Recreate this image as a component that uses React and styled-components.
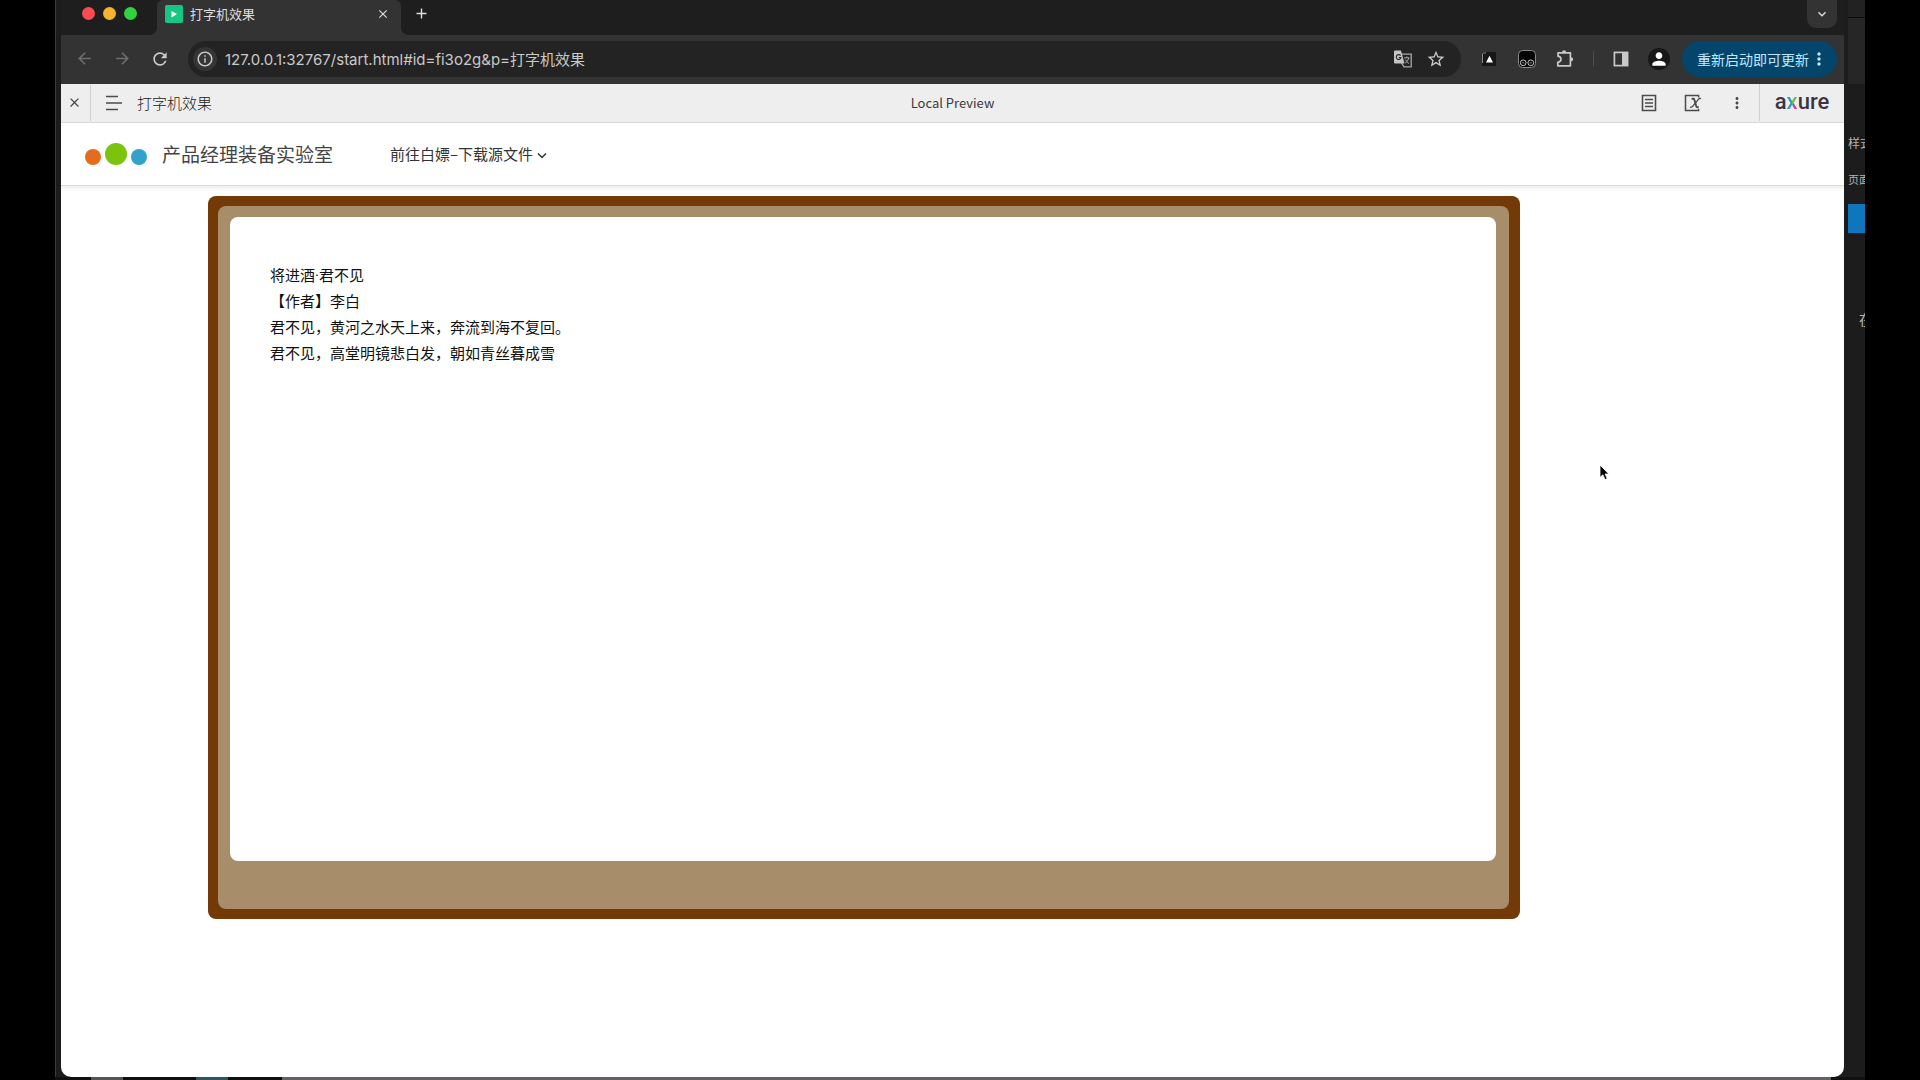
import { useState } from 'react';
import styled, { createGlobalStyle } from 'styled-components';
import {
    MdAdd,
    MdArrowBack,
    MdArrowForward,
    MdClose,
    MdInfoOutline,
    MdKeyboardArrowDown,
    MdMoreVert,
    MdPerson,
    MdRefresh,
    MdStarBorder,
} from 'react-icons/md';

const GlobalStyle = createGlobalStyle`
  *, *::before, *::after {
    box-sizing: border-box;
  }
  body {
    margin: 0;
    background-color: #000000;
    font-family: Roboto, "Noto Sans CJK SC", sans-serif;
  }
  button, input {
    padding: 0;
    border: 0;
    background: none;
    color: inherit;
    font: inherit;
  }
  svg {
    display: block;
    flex: none;
  }
`
const Desktop = styled.div`
  position: relative;
  display: grid;
  grid-template-columns: 6px minmax(0, 1fr) 21px;
  grid-template-rows: 1fr 3px;
  min-height: 100vh;
  margin: 0 55px;
  background-color: #1c1c1c;
  overflow: hidden;
`
const LeftEdge = styled.div`
  border-left: 1px solid #3a3a3a;
`
const Window = styled.div`
  display: flex;
  flex-direction: column;
  border-radius: 0 0 10px 10px;
  background-color: #FFFFFF;
  overflow: hidden;
`
const SidePanel = styled.aside`
  display: flex;
  flex-direction: column;
  padding-left: 4px;
  color: #b4b4b4;
  overflow: hidden;
  white-space: nowrap;
`
const PanelTop = styled.div`
  height: 84px;
  background: linear-gradient(#222222 17px, #0c0c0c 17px, #0c0c0c 18px, #262626 18px);
`
const PanelLabel = styled.div`
  margin-top: ${({ $top }) => $top}px;
  padding-left: ${({ $indent }) => $indent || 0}px;
  font-size: ${({ $size }) => $size}px;
  line-height: 20px;
`
const PanelButton = styled.div`
  height: 29px;
  margin-top: 13px;
  background-color: #0f75bd;
`
const Dock = styled.div`
  grid-column: 1 / -1;
  display: flex;
  padding: 0 34px 0 36px;
  background-color: #101010;
`
const DockItem = styled.div`
  width: 32px;
  margin-right: 73px;
  background-color: ${({ $color }) => $color};
`
const DockBar = styled.div`
  flex: 1;
  margin-left: -19px;
  background-color: #636163;
`

const TabStrip = styled.div`
  display: flex;
  align-items: center;
  height: 35px;
  padding: 0 7px 8px 21px;
  background-color: #1e1e1e;
  color: #dedede;
`
const Light = styled.span`
  width: 13px;
  height: 13px;
  margin-right: 8px;
  border-radius: 50%;
  background-color: ${({ $color }) => $color};
`
const Tab = styled.div`
  position: relative;
  display: flex;
  align-items: center;
  align-self: flex-start;
  width: 244px;
  height: 35px;
  margin-left: 12px;
  padding: 0 8px 8px;
  border-radius: 6px 6px 0 0;
  background-color: #333333;
  font-size: 13px;

  &::before, &::after {
    content: '';
    position: absolute;
    bottom: 0;
    width: 8px;
    height: 8px;
  }
  &::before {
    left: -8px;
    background: radial-gradient(circle at 0 0, transparent 8px, #333333 8px);
  }
  &::after {
    right: -8px;
    background: radial-gradient(circle at 100% 0, transparent 8px, #333333 8px);
  }
`
const TabTitle = styled.span`
  flex: 1;
  margin-left: 7px;
`
const IconButton = styled.button`
  display: flex;
  flex: none;
  justify-content: center;
  align-items: center;
  width: ${({ $width }) => $width || 30}px;
  height: 30px;
  color: ${({ $dim }) => ($dim ? '#6e6e6e' : 'inherit')};
  cursor: pointer;
`
const TabClose = styled(IconButton)`
  width: 20px;
  height: 20px;
`
const NewTab = styled(IconButton)`
  margin-left: 5px;
`
const TabSearch = styled(IconButton)`
  height: 28px;
  margin-left: auto;
  border-radius: 0 0 9px 9px;
  background-color: #333333;
`

const Toolbar = styled.div`
  display: flex;
  align-items: center;
  gap: 8px;
  height: 49px;
  padding: 0 7px 2px 8px;
  background-color: #333333;
  color: #c9c9c9;
`
const Omnibox = styled.label`
  display: flex;
  flex: 1;
  align-items: center;
  min-width: 0;
  height: 36px;
  margin: 0 5px;
  padding: 0 10px 0 5px;
  border-radius: 18px;
  background-color: #232323;
`
const SiteInfo = styled.span`
  display: flex;
  justify-content: center;
  align-items: center;
  width: 24px;
  height: 24px;
  border-radius: 50%;
  background-color: #353535;
`
const Url = styled.input`
  flex: 1;
  min-width: 0;
  margin-left: 8px;
  font-family: Inter, "Noto Sans CJK SC", sans-serif;
  font-size: 15px;
  outline: none;
`
const Divider = styled.span`
  width: 1px;
  height: 16px;
  margin: 0 4px 0 5px;
  background-color: #4c4c4c;
`
const Avatar = styled.span`
  display: flex;
  justify-content: center;
  align-items: center;
  width: 22px;
  height: 22px;
  border-radius: 50%;
  background-color: #171717;
  color: #FFFFFF;
`
const UpdateButton = styled.button`
  display: flex;
  flex: none;
  align-items: center;
  height: 36px;
  padding: 0 8px 0 15px;
  border-radius: 18px;
  background-color: #04466b;
  color: #c2e6ff;
  font-size: 14px;
  cursor: pointer;
`

const PreviewBar = styled.div`
  display: grid;
  grid-template-columns: 1fr auto 1fr;
  height: 39px;
  padding-bottom: 1px;
  border-bottom: 1px solid #d8d8d8;
  background-color: #eeeeee;
  color: #4b4b4b;
  font-family: "Noto Sans CJK SC", sans-serif;
  font-size: 15px;
`
const Side = styled.div`
  display: flex;
  align-items: center;
  justify-content: ${({ $end }) => ($end ? 'flex-end' : 'flex-start')};
`
const PreviewTitle = styled.div`
  align-self: center;
  color: #3a3a3a;
  font-size: 13px;
`
const ClosePreview = styled(IconButton)`
  height: 36px;
  margin-right: 9px;
  padding-right: 2px;
  border-right: 1px solid #d0d0d0;
`
const PageName = styled.span`
  margin-left: 9px;
  color: #222222;
  font-weight: 300;
`
const Brand = styled.a`
  display: flex;
  justify-content: center;
  align-items: center;
  align-self: stretch;
  width: 85px;
  padding-bottom: 2px;
  border-left: 1px solid #cfcfcf;
  color: #3c3541;
  font-family: Roboto, sans-serif;
  font-size: 22px;
  font-weight: 500;
  text-decoration: none;
`
const BrandX = styled.span`
  background: conic-gradient(from 0deg at 50% 58%, #6cc04a 0 90deg, #d63ba0 90deg 180deg, #2f9db8 180deg);
  background-clip: text;
  color: transparent;
`

const SiteHeader = styled.header`
  display: flex;
  align-items: center;
  height: 63px;
  padding: 0 24px 1px;
  border-bottom: 1px solid #d9d9d9;
  box-shadow: 0 3px 3px #f1f1f1;
  color: #444444;
`
const LogoDots = styled.span`
  display: flex;
  align-items: flex-end;
  gap: 4px;
`
const LogoDot = styled.span`
  width: ${({ $size }) => $size}px;
  height: ${({ $size }) => $size}px;
  border-radius: 50%;
  background-color: ${({ $color }) => $color};
`
const SiteName = styled.h1`
  margin: 0 0 0 15px;
  font-size: 19px;
  font-weight: 400;
`
const SiteMenu = styled.button`
  display: flex;
  align-items: center;
  gap: 2px;
  margin-left: 57px;
  color: #333333;
  font-family: "Noto Sans CJK SC", sans-serif;
  font-size: 15px;
  cursor: pointer;
`
const Board = styled.main`
  margin: 10px 324px 0 147px;
  padding: 10px 11px 10px 10px;
  border-radius: 8px;
  background-color: #733a08;
`
const Frame = styled.div`
  padding: 11px 13px 48px 12px;
  border-radius: 8px;
  background-color: #a88d6b;
`
const Paper = styled.article`
  min-height: 644px;
  padding: 46px 40px;
  border-radius: 8px;
  background-color: #FFFFFF;
`
const Line = styled.p`
  margin: 0;
  color: #111111;
  font-size: 15px;
  line-height: 26px;
`
const Pointer = styled.svg`
  position: absolute;
  top: 464px;
  right: 252px;
`

const poem = [
    '将进酒·君不见',
    '【作者】李白',
    '君不见，黄河之水天上来，奔流到海不复回。',
    '君不见，高堂明镜悲白发，朝如青丝暮成雪',
];

const Favicon = () => (
    <svg width="18" height="18" viewBox="0 0 18 18">
        <rect width="18" height="18" rx="2" fill="#16c784" />
        <path d="M6.5 6 L12 9 L6.5 12.4 Z" fill="#FFFFFF" />
    </svg>
)

const TranslateIcon = () => (
    <svg width="18" height="18" viewBox="0 0 18 18" fill="none">
        <path d="M8 4.2 H17.2 V16.8 H10 L7.5 13" stroke="#a8a8a8" strokeWidth="1.3" />
        <path d="M1 0.5 H7 L10.5 13.5 H1 Q0 13.5 0 12.5 V1.5 Q0 0.5 1 0.5 Z" fill="#c4c4c4" />
        <path d="M6.6 5.6 A2.4 2.4 0 1 0 7 7.6 H4.8" stroke="#2b2b2b" strokeWidth="1.1" />
        <path d="M10.2 7.8 H15.6 M12.8 6.4 V7.8 M14.8 8 Q14 11.5 11.2 13 M11.4 9.5 Q12.5 12 15 13.6" stroke="#a8a8a8" />
    </svg>
)

const TriangleIcon = () => (
    <svg width="16" height="16" viewBox="0 0 16 16">
        <rect x="1" y="1" width="14" height="14" rx="1" fill="#171717" />
        <path d="M1.5 12 V3 Q1.5 2 2.5 2 H5" fill="none" stroke="#8a8a8a" />
        <path d="M8.5 4.8 L12 11.5 H5 Z" fill="#FFFFFF" />
    </svg>
)

const MonkeyIcon = () => (
    <svg width="18" height="18" viewBox="0 0 18 18">
        <rect x="0.5" y="0.5" width="17" height="17" rx="4" fill="#050505" stroke="#8a8a8a" />
        <circle cx="5.2" cy="12.8" r="2.9" fill="#111111" stroke="#bdbdbd" />
        <circle cx="12.8" cy="12.8" r="2.9" fill="#111111" stroke="#bdbdbd" />
        <circle cx="5.2" cy="12.8" r="1" fill="#555555" />
        <circle cx="12.8" cy="12.8" r="1" fill="#555555" />
    </svg>
)

const PuzzleIcon = () => (
    <svg width="18" height="18" viewBox="0 0 18 18">
        <path
            d="M2 2.8 H14.4 V15.8 H1.8 V12.4 Q5 11.8 5 9.3 Q5 6.8 2 6.2 Z"
            fill="none"
            stroke="#c9c9c9"
            strokeWidth="1.7"
            strokeLinejoin="round"
        />
        <path d="M6 2.6 A2.1 2.4 0 0 1 10.2 2.6 Z M14.8 7.2 A2.4 2.1 0 0 1 14.8 11.4 Z" fill="#c9c9c9" />
    </svg>
)

const SidePanelIcon = () => (
    <svg width="16" height="16" viewBox="0 0 16 16">
        <rect x="1.4" y="1.4" width="13.2" height="13.2" fill="none" stroke="#c9c9c9" strokeWidth="1.7" />
        <rect x="9" y="1" width="6" height="14" fill="#c9c9c9" />
    </svg>
)

const MenuIcon = () => (
    <svg width="18" height="16" viewBox="0 0 18 16" stroke="#4b4b4b" strokeWidth="1.6">
        <path d="M1 1.5 H13 M1 8 H17 M1 14.5 H13" />
    </svg>
)

const NotesIcon = () => (
    <svg width="16" height="18" viewBox="0 0 16 18" fill="none" stroke="#4b4b4b" strokeWidth="1.6">
        <path d="M1.5 1.5 H14.5 V16.5 H1.5 Z M4 5.5 H12 M4 9 H12 M4 12.5 H12" />
    </svg>
)

const VariablesIcon = () => (
    <svg width="18" height="18" viewBox="0 0 18 18" fill="none" stroke="#4b4b4b">
        <path d="M14.6 3.6 V1.5 H1.5 V16.5 H14.6 V15" strokeWidth="1.5" />
        <path d="M7.6 4.8 H9.6 Q10.2 4.8 10.5 6 L12.2 12 Q12.6 13.2 13.4 13.2 H14.8" strokeWidth="1.9" />
        <path d="M17 4.6 Q15.6 3.8 14.4 5.4 L8.6 12.4 Q7.4 13.8 6 13" strokeWidth="1.3" />
    </svg>
)

const ChevronIcon = () => (
    <svg width="14" height="16" viewBox="0 0 14 16" fill="none" stroke="#333333" strokeWidth="1.5">
        <path d="M3 7.5 L7 11.5 L11 7.5" />
    </svg>
)

const BrowserTabs = () => (
    <TabStrip>
        <Light $color="#fb4b50" />
        <Light $color="#f6b32e" />
        <Light $color="#2fd43c" />
        <Tab>
            <Favicon />
            <TabTitle>打字机效果</TabTitle>
            <TabClose aria-label="关闭标签页"><MdClose size="14px" /></TabClose>
        </Tab>
        <NewTab aria-label="新标签页"><MdAdd size="17px" /></NewTab>
        <TabSearch aria-label="搜索标签页"><MdKeyboardArrowDown size="16px" /></TabSearch>
    </TabStrip>
)

const BrowserToolbar = () => {
    const [url, setUrl] = useState('127.0.0.1:32767/start.html#id=fi3o2g&p=打字机效果');

    return (
        <Toolbar>
            <IconButton $dim aria-label="后退"><MdArrowBack size="19px" /></IconButton>
            <IconButton $dim aria-label="前进"><MdArrowForward size="19px" /></IconButton>
            <IconButton aria-label="重新加载"><MdRefresh size="20px" /></IconButton>
            <Omnibox>
                <SiteInfo><MdInfoOutline size="18px" /></SiteInfo>
                <Url aria-label="地址" value={url} onChange={(e) => setUrl(e.target.value)} />
                <IconButton $width={36} aria-label="翻译"><TranslateIcon /></IconButton>
                <IconButton aria-label="收藏"><MdStarBorder size="20px" /></IconButton>
            </Omnibox>
            <IconButton aria-label="扩展一"><TriangleIcon /></IconButton>
            <IconButton aria-label="扩展二"><MonkeyIcon /></IconButton>
            <IconButton aria-label="扩展程序"><PuzzleIcon /></IconButton>
            <Divider />
            <IconButton aria-label="侧边栏"><SidePanelIcon /></IconButton>
            <IconButton aria-label="用户"><Avatar><MdPerson size="20px" /></Avatar></IconButton>
            <UpdateButton>
                重新启动即可更新
                <MdMoreVert size="20px" />
            </UpdateButton>
        </Toolbar>
    )
}

const Preview = () => (
    <PreviewBar>
        <Side>
            <ClosePreview aria-label="关闭"><MdClose size="15px" /></ClosePreview>
            <IconButton aria-label="菜单" $width={28}><MenuIcon /></IconButton>
            <PageName>打字机效果</PageName>
        </Side>
        <PreviewTitle>Local Preview</PreviewTitle>
        <Side $end>
            <IconButton $width={44} aria-label="备注"><NotesIcon /></IconButton>
            <IconButton $width={44} aria-label="变量"><VariablesIcon /></IconButton>
            <IconButton $width={44} aria-label="更多"><MdMoreVert size="18px" /></IconButton>
            <Brand href="#axure">a<BrandX>x</BrandX>ure</Brand>
        </Side>
    </PreviewBar>
)

export default function App() {
    return (
        <>
            <GlobalStyle />
            <Desktop>
                <LeftEdge />
                <Window>
                    <BrowserTabs />
                    <BrowserToolbar />
                    <Preview />
                    <SiteHeader>
                        <LogoDots>
                            <LogoDot $size={16} $color="#e46c1c" />
                            <LogoDot $size={22} $color="#7ac40c" />
                            <LogoDot $size={16} $color="#31a3cb" />
                        </LogoDots>
                        <SiteName>产品经理装备实验室</SiteName>
                        <SiteMenu>
                            前往白嫖–下载源文件
                            <ChevronIcon />
                        </SiteMenu>
                    </SiteHeader>
                    <Board>
                        <Frame>
                            <Paper>
                                {poem.map((line) => <Line key={line}>{line}</Line>)}
                            </Paper>
                        </Frame>
                    </Board>
                </Window>
                <SidePanel>
                    <PanelTop />
                    <PanelLabel $top={50} $size={12}>样式</PanelLabel>
                    <PanelLabel $top={17} $size={11}>页面</PanelLabel>
                    <PanelButton />
                    <PanelLabel $top={77} $size={14} $indent={11}>在</PanelLabel>
                </SidePanel>
                <Dock>
                    <DockItem $color="#555555" />
                    <DockItem $color="#2f5560" />
                    <DockBar />
                </Dock>
                <Pointer width="14" height="18" viewBox="0 0 14 18">
                    <path
                        d="M1 1 V13.4 L3.9 10.8 L6 15.6 L8.2 14.6 L6.1 10 H9.8 Z"
                        fill="#000000"
                        stroke="#FFFFFF"
                        strokeWidth="0.8"
                    />
                </Pointer>
            </Desktop>
        </>
    )
}
